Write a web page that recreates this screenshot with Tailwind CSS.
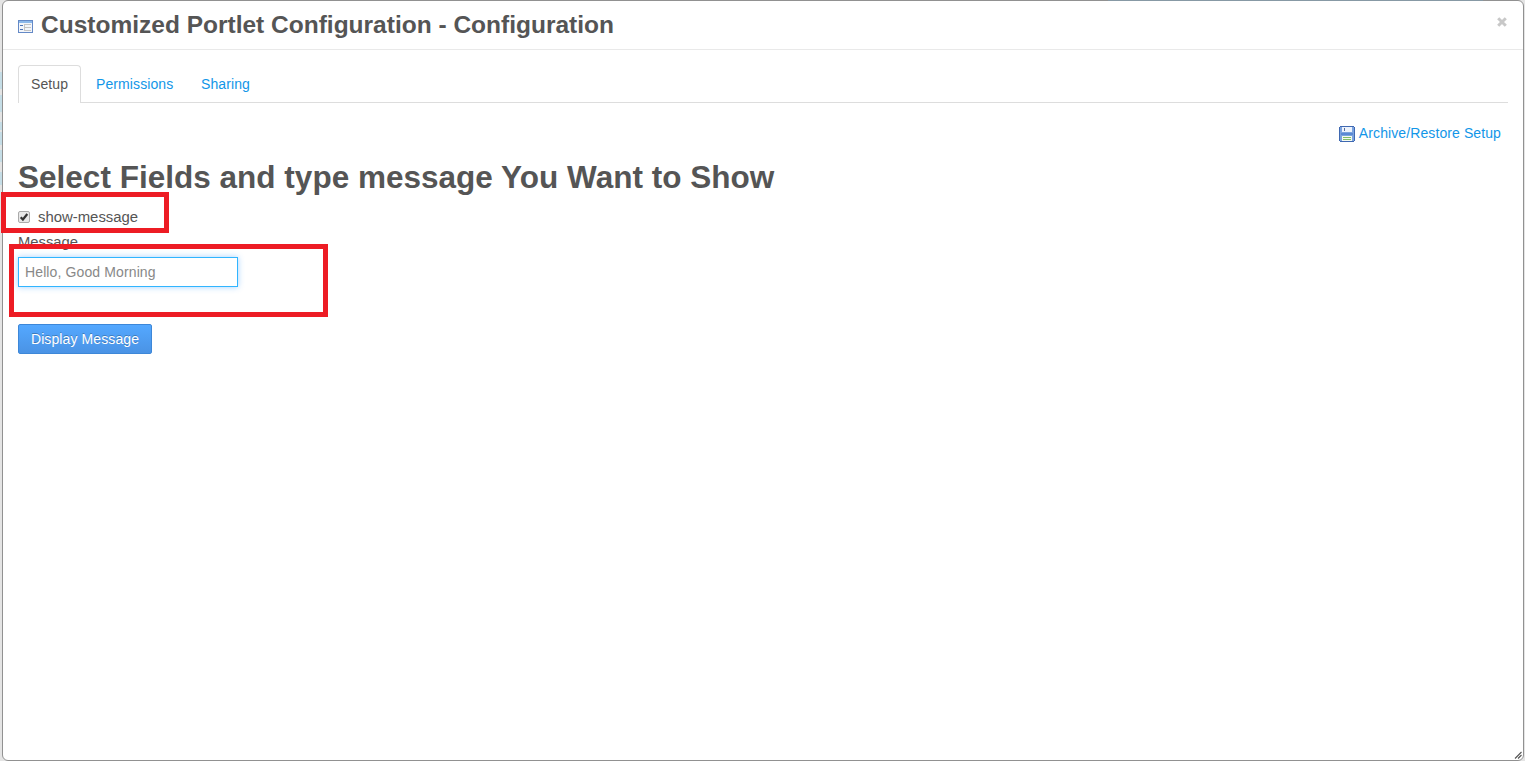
<!DOCTYPE html>
<html lang="en">
<head>
<meta charset="utf-8">
<title>Configuration</title>
<script src="https://cdn.jsdelivr.net/npm/@tailwindcss/browser@4"></script>
</head>
<body class="relative h-[761px] overflow-hidden bg-[#e4e4e4] pl-0.5 pr-px font-['Liberation_Sans',Arial,sans-serif] text-sm leading-5 text-[#555]">
  <!-- page behind the dialog -->
  <div class="absolute left-0 top-0 w-0.5">
    <div class="mt-[72px] h-[17px] bg-[#c5dde6]"></div>
    <div class="mt-1.5 h-[17px] bg-[#c5dde6]"></div>
    <div class="mt-2.5 h-2 bg-[#c5dde6]"></div>
    <div class="mt-0.5 h-[13px] bg-[#c5dde6]"></div>
    <div class="mt-[5px] h-3 bg-[#c5dde6]"></div>
    <div class="mt-2.5 h-[13px] bg-[#c5dde6]"></div>
  </div>
  <main class="relative flex h-[761px] flex-col rounded-md border border-[#919191] bg-white">
    <header class="flex h-[49px] shrink-0 items-center border-b border-[#e9e9e9] pb-0.5 pl-[15px] pr-4">
      <svg class="mt-1 mr-2 h-[13px] w-[15px]" viewBox="0 0 15 13" shape-rendering="crispEdges">
        <rect width="15" height="13" fill="#6489c6"/>
        <rect x="1" y="1" width="13" height="2" fill="#8bb8ea"/>
        <rect x="1" y="3" width="13" height="9" fill="#f2f5fa"/>
        <path d="M2 5h3v1H2zM2 9h3v1H2z" fill="#4d73b5"/>
        <path d="M6 4h7v1H6zM6 4h1v3H6zM6 7h7v1H6zM6 8h1v3H6zM6 10h7v1H6z" fill="#c4c4c4"/>
      </svg>
      <h1 class="mt-0.5 whitespace-nowrap text-[24.5px] font-bold leading-10">Customized Portlet Configuration - Configuration</h1>
      <svg class="-mt-1 ml-auto h-[10px] w-[10px]" viewBox="0 0 10 10"><path d="M1.2 1.2l7.6 7.6M8.8 1.2L1.2 8.8" stroke="#c8c8c8" stroke-width="3"/></svg>
    </header>
    <nav class="mx-[15px] mt-[15px] flex h-[38px] shrink-0 border-b border-[#ddd] leading-5 text-[#1296e8]">
      <a class="-mb-px w-[63px] shrink-0 rounded-t border border-b-0 border-[#ddd] bg-white pl-3 pt-2 tracking-[0.1px] text-[#555]">Setup</a>
      <a class="ml-[15px] w-[105px] pt-[9px] tracking-[0.1px]">Permissions</a>
      <a class="pt-[9px] tracking-[0.1px]">Sharing</a>
    </nav>
    <div class="mt-5 mr-[22px] flex h-5 items-center justify-end text-[#1296e8]">
      <svg class="mt-0.5 mr-1 h-4 w-4" viewBox="0 0 16 16" shape-rendering="crispEdges">
        <path d="M1 0h14v1h1v14h-1v1H1v-1H0V1h1z" fill="#3f68b1"/>
        <path d="M1 1h14v14H1z" fill="#7ba3df"/>
        <path d="M3 1h10v5H3z" fill="#edf3fc"/>
        <path d="M5 2h1v3H5z" fill="#52699a"/>
        <path d="M2 7h12v2H2z" fill="#5b89d3"/>
        <path d="M3 10h10v5H3z" fill="#f5faef"/>
        <path d="M4 11h8v1H4zM4 13h8v1H4z" fill="#82bd68"/>
      </svg>
      <span class="tracking-[0.1px]">Archive/Restore Setup</span>
    </div>
    <form class="flex flex-col items-start pl-[15px]">
      <h2 class="mt-3.5 whitespace-nowrap text-[31.5px] font-bold leading-10 tracking-[0.015px]">Select Fields and type message You Want to Show</h2>
      <label class="mt-2.5 flex h-5 items-center">
        <svg class="mr-2 h-3 w-3" viewBox="0 0 12 12"><rect x=".5" y=".5" width="11" height="11" rx="1.5" fill="#e8e8e8" stroke="#aaa"/><path d="M2.7 6.2l2.2 2.3L9.3 3" fill="none" stroke="#333" stroke-width="2.2"/></svg>
        <span class="text-[14.9px]">show-message</span>
      </label>
      <label class="mt-[5px] h-5 text-[14.8px]">Message</label>
      <div class="mt-[5px] h-[30px] w-[220px] border border-[#31b5ff] bg-white pl-1.5 leading-7 tracking-[0.12px] text-[#888] shadow-[0_0_6px_rgba(49,150,255,0.45)]">Hello, Good Morning</div>
      <button type="button" class="mt-[37px] h-[30px] w-[134px] rounded-xs border border-[#3d87d8] bg-linear-to-b from-[#54a8ff] to-[#4a93e5] tracking-[0.1px] text-white [text-shadow:0_-1px_0_rgba(0,0,0,0.25)]">Display Message</button>
    </form>
    <svg class="absolute bottom-px right-px h-2 w-2" viewBox="0 0 8 8"><path d="M1 7.5L7.5 1M4 7.5L7.5 4" stroke="#555" stroke-width="1.1"/></svg>
  </main>
  <!-- highlight boxes -->
  <div class="absolute left-px top-[192px] h-[41px] w-[168px] border-[5px] border-[#ed1c24]"></div>
  <div class="absolute left-[9px] top-[244px] h-[73px] w-[319px] border-[5px] border-[#ed1c24]"></div>
  <div class="absolute left-[1108px] top-0 h-px w-[375px] bg-[#8799a5]"></div>
</body>
</html>
